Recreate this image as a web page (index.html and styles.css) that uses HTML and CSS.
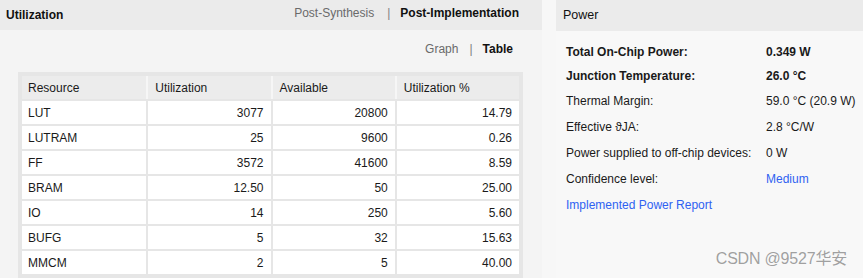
FILE: index.html
```html
<!DOCTYPE html>
<html lang="en">
<head>
    <meta charset="UTF-8">
    <meta name="viewport" content="width=device-width, initial-scale=1.0">
    <title>Project Summary</title>
    <link rel="stylesheet" href="styles.css">
</head>
<body>
    <div class="page">
        <section class="panel util">
            <div class="panel-header">
                <span class="panel-title">Utilization</span>
                <div class="switch">
                    <a href="#" class="off">Post-Synthesis</a>
                    <span class="sep">|</span>
                    <a href="#" class="on">Post-Implementation</a>
                </div>
            </div>
            <div class="util-body">
                <div class="view-switch">
                    <a href="#" class="off">Graph</a>
                    <span class="sep">|</span>
                    <a href="#" class="on">Table</a>
                </div>
                <table class="util-table">
                    <thead>
                        <tr>
                            <th>Resource</th>
                            <th>Utilization</th>
                            <th>Available</th>
                            <th>Utilization %</th>
                        </tr>
                    </thead>
                    <tbody>
                        <tr><td>LUT</td><td>3077</td><td>20800</td><td>14.79</td></tr>
                        <tr><td>LUTRAM</td><td>25</td><td>9600</td><td>0.26</td></tr>
                        <tr><td>FF</td><td>3572</td><td>41600</td><td>8.59</td></tr>
                        <tr><td>BRAM</td><td>12.50</td><td>50</td><td>25.00</td></tr>
                        <tr><td>IO</td><td>14</td><td>250</td><td>5.60</td></tr>
                        <tr><td>BUFG</td><td>5</td><td>32</td><td>15.63</td></tr>
                        <tr><td>MMCM</td><td>2</td><td>5</td><td>40.00</td></tr>
                    </tbody>
                </table>
            </div>
        </section>

        <section class="panel power">
            <div class="panel-header">
                <span class="panel-title">Power</span>
            </div>
            <div class="power-body">
                <div class="power-grid">
                    <span class="label strong">Total On-Chip Power:</span>
                    <span class="value strong">0.349 W</span>
                    <span class="label strong">Junction Temperature:</span>
                    <span class="value strong">26.0 °C</span>
                    <span class="label">Thermal Margin:</span>
                    <span class="value">59.0 °C (20.9 W)</span>
                    <span class="label">Effective ϑJA:</span>
                    <span class="value">2.8 °C/W</span>
                    <span class="label">Power supplied to off-chip devices:</span>
                    <span class="value">0 W</span>
                    <span class="label">Confidence level:</span>
                    <a href="#" class="value link">Medium</a>
                    <a href="#" class="report link">Implemented Power Report</a>
                </div>
            </div>
        </section>

        <div class="watermark">CSDN @9527华安</div>
    </div>
</body>
</html>
```

FILE: styles.css
```css
body {
    margin: 0;
    padding: 0;
    font-family: "Liberation Sans", Arial, "Noto Sans CJK SC", sans-serif;
    font-size: 12px;
    color: #1a1a1a;
    background-color: #f7f7f7;
}

a {
    text-decoration: none;
    color: inherit;
}

.page {
    position: relative;
    display: flex;
    gap: 14px;
    height: 278px;
    overflow: hidden;
}

.panel {
    display: flex;
    flex-direction: column;
}

.panel.util {
    width: 542px;
    background-color: #f4f4f4;
}

.panel.power {
    flex: 1;
    background-color: #f8f8f8;
}

.panel-header {
    height: 31px;
    background-color: #ebebeb;
    display: flex;
    justify-content: space-between;
    align-items: center;
    padding: 0 23px 1px 6px;
    box-sizing: border-box;
}

.panel-title {
    font-weight: bold;
    color: #111;
}

.power .panel-header {
    padding-left: 7px;
}

.power .panel-title {
    font-weight: normal;
    font-size: 12.5px;
}

.switch {
    display: flex;
    align-items: center;
    margin-top: -3px;
}

.off {
    color: #6a6a6a;
}

.on {
    font-weight: bold;
    color: #111;
}

.switch .sep {
    color: #808080;
    margin: 0 10px 0 13px;
}

.view-switch {
    display: flex;
    justify-content: flex-end;
    line-height: 14px;
    padding: 12px 29px 0 0;
}

.view-switch .sep {
    color: #808080;
    margin: 0 10px 0 11px;
}

.util-table {
    margin: 16px 0 0 18px;
    width: 505px;
    table-layout: fixed;
    border-spacing: 0;
    border: 4px solid #e6e6e6;
    background-color: #ffffff;
}

.util-table th,
.util-table td {
    height: 23px;
    padding: 0 7px;
    border-left: 2px solid #e6e6e6;
    white-space: nowrap;
}

.util-table th {
    background-color: #ececec;
    font-weight: normal;
    text-align: left;
    border-left-color: #f6f6f6;
}

.util-table td {
    border-top: 2px solid #e6e6e6;
    text-align: right;
}

.util-table th:first-child,
.util-table td:first-child {
    border-left: none;
    padding-left: 6px;
    text-align: left;
}

.power-body {
    padding: 8px 0 0 10px;
}

.power-grid {
    display: grid;
    grid-template-columns: 200px 1fr;
    grid-template-rows: 25px 24px;
    grid-auto-rows: 26px;
    align-items: center;
}

.strong {
    font-weight: bold;
}

.link {
    color: #2f62f2;
}

.report {
    grid-column: 1 / span 2;
}

.watermark {
    position: absolute;
    right: 16px;
    bottom: 9px;
    font-size: 16px;
    color: rgba(120, 120, 120, 0.7);
    letter-spacing: -0.2px;
}
```
